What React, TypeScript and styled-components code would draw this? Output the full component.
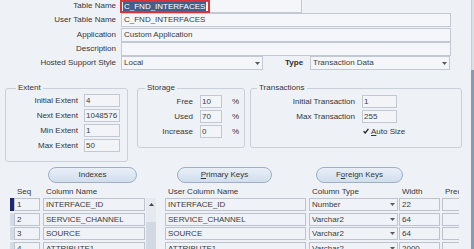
import React from "react";
import styled, { createGlobalStyle } from "styled-components";

const Global = createGlobalStyle`
  html, body { margin: 0; padding: 0; background: #eef1f6; }
  body {
    font-family: "Liberation Sans", Arial, sans-serif;
    font-size: 8px;
    color: #363636;
  }
  * { box-sizing: border-box; }
`;

const BG = "#eef1f6";

const Window = styled.div`
  width: 474px;
  height: 249px;
  overflow: hidden;
  display: flex;
  background: ${BG};
`;

const Main = styled.div`
  flex: 1;
  min-width: 0;
  display: flex;
  flex-direction: column;
`;

const EdgeStrip = styled.div`
  width: 3px;
  display: flex;
  flex-direction: column;
`;

const EdgeTop = styled.div`
  height: 70px;
  background: #dbe0e8;
  border-left: 1px solid #c6cdd7;
`;

const EdgeBottom = styled.div`
  flex: 1;
  background: #8a9ab1;
`;

/* ---------- header form ---------- */

const HeaderForm = styled.div`
  display: grid;
  grid-template-columns: 116px auto;
  column-gap: 5px;
  row-gap: 0.33px;
  margin-top: -1px;
`;

const Label = styled.div`
  text-align: right;
  line-height: 14px;
  height: 14px;
  white-space: nowrap;
  color: #363636;
`;

const FieldLine = styled.div`
  display: flex;
  align-items: center;
  height: 14px;
`;

const Field = styled.div<{ $w: number }>`
  position: relative;
  width: ${(p) => p.$w}px;
  height: 14px;
  border: 1px solid #c3c9d2;
  background: #f4f6f9;
  padding: 0 2px;
  line-height: 12px;
  color: #3c3c3c;
  white-space: nowrap;
  overflow: visible;
  display: flex;
  align-items: center;
  justify-content: space-between;
`;

const Selected = styled.span`
  background: #3f5f8f;
  color: #fff;
  padding: 0 1px;
  margin-left: -1px;
  line-height: 11px;
`;

const Annotation = styled.div`
  position: absolute;
  left: -2px;
  top: 0;
  width: 90px;
  height: 13px;
  border: 2px solid #d8333b;
  pointer-events: none;
`;

const TypeLabel = styled.div`
  margin: 0 7px 0 22px;
  font-weight: bold;
  color: #2e2e2e;
  line-height: 14px;
`;

const Arrow = () => (
  <svg width="5" height="3" viewBox="0 0 5 3">
    <path d="M0 0h5L2.5 3z" fill="#5a5a5a" />
  </svg>
);

/* ---------- groups ---------- */

const GroupRow = styled.div`
  display: flex;
  align-items: flex-start;
  padding-left: 5px;
  margin-top: 17.67px;
`;

const Group = styled.div<{ $w: number; $h: number; $ml: number; $pt: number }>`
  position: relative;
  width: ${(p) => p.$w}px;
  height: ${(p) => p.$h}px;
  margin-left: ${(p) => p.$ml}px;
  border: 1px solid #c9d0da;
  border-radius: 3px;
  padding-top: ${(p) => p.$pt}px;
`;

const GroupTitle = styled.span<{ $x: number }>`
  position: absolute;
  top: -6px;
  left: ${(p) => p.$x}px;
  padding: 0 2px;
  background: ${BG};
  line-height: 10px;
  color: #363636;
`;

const GroupGrid = styled.div<{ $label: number; $field: number; $gap: number }>`
  display: grid;
  grid-template-columns: ${(p) => p.$label}px ${(p) => p.$field}px auto;
  column-gap: ${(p) => p.$gap}px;
  row-gap: 2px;
  align-items: center;
`;

const GLabel = styled.div`
  text-align: right;
  white-space: nowrap;
  line-height: 13px;
`;

const GField = styled.div`
  height: 13px;
  border: 1px solid #c3c9d2;
  background: #f2f4f8;
  padding: 0 1px;
  line-height: 11px;
  color: #3c3c3c;
  white-space: nowrap;
  overflow: hidden;
`;

const Percent = styled.div`
  margin-left: 3px;
  line-height: 13px;
`;

const CheckLine = styled.div`
  grid-column: 2 / span 2;
  display: flex;
  align-items: center;
  gap: 2px;
  height: 13px;
  margin-left: 1px;
  white-space: nowrap;
`;

/* ---------- buttons ---------- */

const ButtonRow = styled.div`
  display: flex;
  margin-top: 5px;
  padding-left: 48px;
`;

const Pill = styled.div<{ $w: number; $ml: number }>`
  width: ${(p) => p.$w}px;
  height: 16px;
  margin-left: ${(p) => p.$ml}px;
  border: 1px solid #9fb0c5;
  border-radius: 8px;
  background: linear-gradient(#e8eff8, #d2deed);
  display: flex;
  align-items: center;
  justify-content: center;
  color: #363636;
  line-height: 14px;
`;

/* ---------- table ---------- */

const TableClip = styled.div`
  margin-top: 4px;
  margin-left: 10px;
  width: 449px;
  overflow: hidden;
`;

const Table = styled.div`
  display: grid;
  grid-template-columns: 4px 29px 103px 19px 144px 90px 43px 40px;
  grid-template-rows: 10px;
  grid-auto-rows: 13px;
  row-gap: 1.5px;
  width: 520px;
`;

const Head = styled.div<{ $col: number }>`
  grid-column: ${(p) => p.$col};
  grid-row: 1;
  line-height: 10px;
  padding-left: 3px;
  white-space: nowrap;
  color: #363636;
`;

const Indicator = styled.div<{ $on: boolean; $row: number }>`
  grid-column: 1;
  grid-row: ${(p) => p.$row};
  width: 4px;
  height: 13px;
  background: ${(p) => (p.$on ? "#1c2673" : "#d5dbe4")};
`;

const Cell = styled.div<{ $col: number; $row: number; $w: number }>`
  grid-column: ${(p) => p.$col};
  grid-row: ${(p) => p.$row};
  width: ${(p) => p.$w}px;
  height: 13px;
  border: 1px solid #bcc3cd;
  background: #eff2f6;
  padding: 0 2px;
  line-height: 11px;
  color: #3c3c3c;
  white-space: nowrap;
  overflow: hidden;
  display: flex;
  align-items: center;
  justify-content: space-between;
`;

const Scrollbar = styled.div`
  grid-column: 4;
  grid-row: 2 / span 4;
  width: 10px;
  display: flex;
  flex-direction: column;
  background: #e6eaf0;
`;

const ScrollUp = styled.div`
  height: 12px;
  display: flex;
  align-items: center;
  justify-content: center;
`;

const ScrollTrack = styled.div`
  flex: 1;
  display: flex;
  flex-direction: column;
  padding-top: 12px;
`;

const ScrollThumb = styled.div`
  flex: 1;
  background: #d3d9e2;
`;

const rows = [
  { seq: "1", col: "INTERFACE_ID", type: "Number", width: "22", cur: true },
  { seq: "2", col: "SERVICE_CHANNEL", type: "Varchar2", width: "64", cur: false },
  { seq: "3", col: "SOURCE", type: "Varchar2", width: "64", cur: false },
  { seq: "4", col: "ATTRIBUTE1", type: "Varchar2", width: "2000", cur: false },
];

export default function App() {
  return (
    <>
      <Global />
      <Window>
        <Main>
          <HeaderForm>
            <Label>Table Name</Label>
            <FieldLine>
              <Field $w={181}>
                <Selected>C_FND_INTERFACES</Selected>
                <Annotation />
              </Field>
            </FieldLine>
            <Label>User Table Name</Label>
            <FieldLine>
              <Field $w={330}>C_FND_INTERFACES</Field>
            </FieldLine>
            <Label>Application</Label>
            <FieldLine>
              <Field $w={330}>Custom Application</Field>
            </FieldLine>
            <Label>Description</Label>
            <FieldLine>
              <Field $w={330} />
            </FieldLine>
            <Label>Hosted Support Style</Label>
            <FieldLine>
              <Field $w={142}>
                <span>Local</span>
                <Arrow />
              </Field>
              <TypeLabel>Type</TypeLabel>
              <Field $w={140}>
                <span>Transaction Data</span>
                <Arrow />
              </Field>
            </FieldLine>
          </HeaderForm>

          <GroupRow>
            <Group $w={123} $h={74} $ml={0} $pt={5}>
              <GroupTitle $x={10}>Extent</GroupTitle>
              <GroupGrid $label={72} $field={36} $gap={6}>
                <GLabel>Initial Extent</GLabel>
                <GField>4</GField>
                <span />
                <GLabel>Next Extent</GLabel>
                <GField>1048576</GField>
                <span />
                <GLabel>Min Extent</GLabel>
                <GField>1</GField>
                <span />
                <GLabel>Max Extent</GLabel>
                <GField>50</GField>
                <span />
              </GroupGrid>
            </Group>
            <Group $w={108} $h={60} $ml={9} $pt={6}>
              <GroupTitle $x={7}>Storage</GroupTitle>
              <GroupGrid $label={55} $field={22} $gap={7}>
                <GLabel>Free</GLabel>
                <GField>10</GField>
                <Percent>%</Percent>
                <GLabel>Used</GLabel>
                <GField>70</GField>
                <Percent>%</Percent>
                <GLabel>Increase</GLabel>
                <GField>0</GField>
                <Percent>%</Percent>
              </GroupGrid>
            </Group>
            <Group $w={212} $h={60} $ml={5} $pt={6}>
              <GroupTitle $x={6}>Transactions</GroupTitle>
              <GroupGrid $label={104} $field={35} $gap={7}>
                <GLabel>Initial Transaction</GLabel>
                <GField>1</GField>
                <span />
                <GLabel>Max Transaction</GLabel>
                <GField>255</GField>
                <span />
                <span />
                <CheckLine>
                  <svg width="6" height="6" viewBox="0 0 6 6">
                    <path d="M0.6 3.2L2.2 4.9L5.4 0.9" stroke="#222" strokeWidth="1.3" fill="none" />
                  </svg>
                  <span>
                    <u>A</u>uto Size
                  </span>
                </CheckLine>
              </GroupGrid>
            </Group>
          </GroupRow>

          <ButtonRow>
            <Pill $w={89} $ml={0}>Indexes</Pill>
            <Pill $w={95} $ml={40}>
              <span>
                <u>P</u>rimary Keys
              </span>
            </Pill>
            <Pill $w={87} $ml={44}>
              <span>
                F<u>o</u>reign Keys
              </span>
            </Pill>
          </ButtonRow>

          <TableClip>
            <Table>
              <Head $col={2}>Seq</Head>
              <Head $col={3}>Column Name</Head>
              <Head $col={5}>User Column Name</Head>
              <Head $col={6}>Column Type</Head>
              <Head $col={7}>Width</Head>
              <Head $col={8}>Prec</Head>
              <Scrollbar>
                <ScrollUp>
                  <svg width="5" height="3" viewBox="0 0 5 3">
                    <path d="M0 3h5L2.5 0z" fill="#444" />
                  </svg>
                </ScrollUp>
                <ScrollTrack>
                  <ScrollThumb />
                </ScrollTrack>
              </Scrollbar>
              {rows.map((r, i) => (
                <React.Fragment key={r.seq}>
                  <Indicator $on={r.cur} $row={i + 2} />
                  <Cell $col={2} $row={i + 2} $w={26}>{r.seq}</Cell>
                  <Cell $col={3} $row={i + 2} $w={102}>{r.col}</Cell>
                  <Cell $col={5} $row={i + 2} $w={141}>{r.col}</Cell>
                  <Cell $col={6} $row={i + 2} $w={89}>
                    <span>{r.type}</span>
                    <Arrow />
                  </Cell>
                  <Cell $col={7} $row={i + 2} $w={41}>{r.width}</Cell>
                  <Cell $col={8} $row={i + 2} $w={40} />
                </React.Fragment>
              ))}
            </Table>
          </TableClip>
        </Main>
        <EdgeStrip>
          <EdgeTop />
          <EdgeBottom />
        </EdgeStrip>
      </Window>
    </>
  );
}
